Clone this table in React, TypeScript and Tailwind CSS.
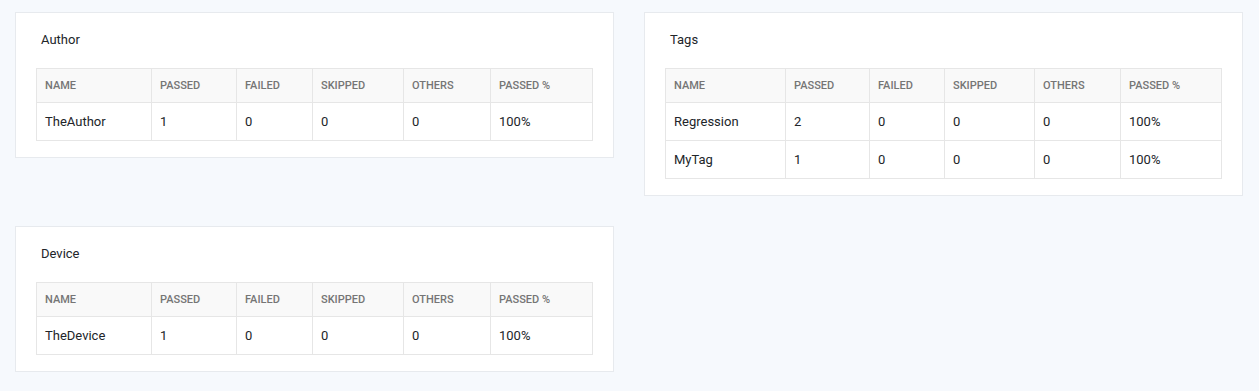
type Row = { name: string; passed: number; failed: number; skipped: number; others: number; pct: string };

type Section = { title: string; cols: number[]; rows: Row[] };

const headers = ["Name", "Passed", "Failed", "Skipped", "Others", "Passed %"];

const author: Section = {
  title: "Author",
  cols: [115, 85, 76, 91, 87, 102],
  rows: [{ name: "TheAuthor", passed: 1, failed: 0, skipped: 0, others: 0, pct: "100%" }],
};

const tags: Section = {
  title: "Tags",
  cols: [120, 84, 75, 90, 86, 101],
  rows: [
    { name: "Regression", passed: 2, failed: 0, skipped: 0, others: 0, pct: "100%" },
    { name: "MyTag", passed: 1, failed: 0, skipped: 0, others: 0, pct: "100%" },
  ],
};

const device: Section = {
  title: "Device",
  cols: [115, 85, 76, 91, 87, 102],
  rows: [{ name: "TheDevice", passed: 1, failed: 0, skipped: 0, others: 0, pct: "100%" }],
};

function StatCard({ section }: { section: Section }) {
  return (
    <div className="border border-[#e7eaee] bg-white px-5 pb-4 pt-[17px]">
      <h5 className="mb-[18px] pl-[5px] text-[13px] leading-5 font-normal text-[#212529]">{section.title}</h5>
      <table className="w-full table-fixed border-collapse text-left">
        <colgroup>
          {section.cols.map((w, i) => (
            <col key={i} style={{ width: w }} />
          ))}
        </colgroup>
        <thead>
          <tr className="h-[34px] bg-[#f9f9f9]">
            {headers.map((h) => (
              <th
                key={h}
                className="border border-[#e6e6e6] px-2 pt-[2px] text-[11px] font-medium uppercase text-[#757575]"
              >
                {h}
              </th>
            ))}
          </tr>
        </thead>
        <tbody>
          {section.rows.map((r) => (
            <tr key={r.name} className="h-[38px] text-[13px] text-[#212529]">
              <td className="border border-[#e6e6e6] px-2">{r.name}</td>
              <td className="border border-[#e6e6e6] px-2">{r.passed}</td>
              <td className="border border-[#e6e6e6] px-2">{r.failed}</td>
              <td className="border border-[#e6e6e6] px-2">{r.skipped}</td>
              <td className="border border-[#e6e6e6] px-2">{r.others}</td>
              <td className="border border-[#e6e6e6] px-2">{r.pct}</td>
            </tr>
          ))}
        </tbody>
      </table>
    </div>
  );
}

export default function App() {
  return (
    <div className="min-h-screen bg-[#f6f9fd] pl-[15px] pr-4 pt-3 font-['Roboto',sans-serif]">
      <div className="grid grid-cols-2 items-start gap-[30px]">
        <StatCard section={author} />
        <StatCard section={tags} />
        <StatCard section={device} />
      </div>
    </div>
  );
}
